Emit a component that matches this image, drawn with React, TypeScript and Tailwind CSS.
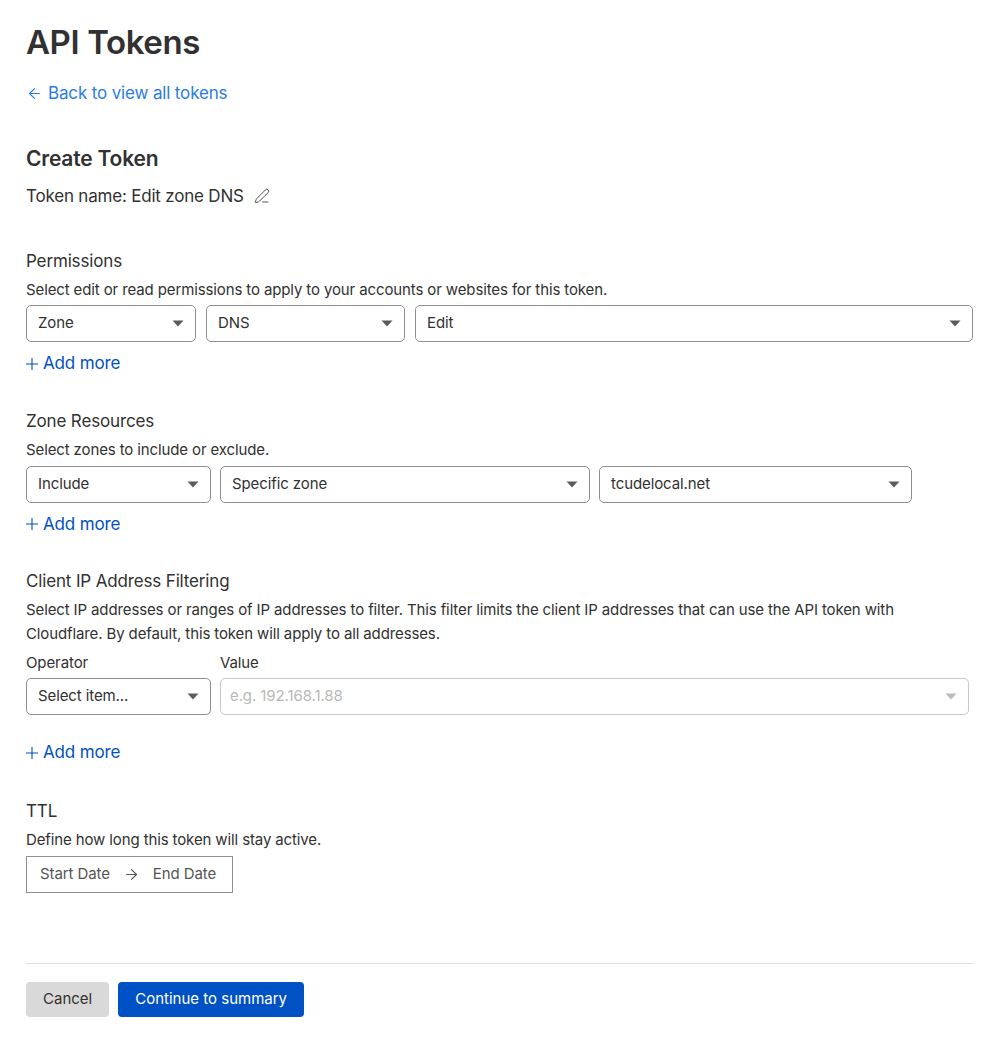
import { ArrowLeft, ArrowRight, PenLine } from 'lucide-react'

function Caret({ muted = false }: { muted?: boolean }) {
  return (
    <svg width="12" height="7" viewBox="0 0 12 7" className="shrink-0">
      <path d="M0.5 0.5h11L6 6.5z" fill={muted ? '#bdbdbd' : '#5c5c5c'} />
    </svg>
  )
}

function Select({ value, width, muted = false, placeholder = false }: { value: string; width: string; muted?: boolean; placeholder?: boolean }) {
  return (
    <div
      className={`flex h-[37px] items-center justify-between rounded-[5px] border pl-[11px] pr-[11px] ${width} ${
        muted ? 'border-[#c8c8c8]' : 'border-[#8f8f8f]'
      }`}
    >
      <span className={`text-[15px] tracking-[-0.1px] ${placeholder ? 'text-[#b9b9b9]' : 'text-[#313131]'}`}>{value}</span>
      <Caret muted={muted} />
    </div>
  )
}

function AddMore() {
  return (
    <button className="mt-[9px] flex items-center gap-[5px] text-[17px] tracking-[-0.15px] text-[#0051c3]">
      <svg width="12" height="12" viewBox="0 0 12 12" className="shrink-0">
        <path d="M6 0v12M0 6h12" stroke="#0051c3" strokeWidth="1.1" />
      </svg>
      <span>Add more</span>
    </button>
  )
}

function Section({ title, desc, children }: { title: string; desc: React.ReactNode; children: React.ReactNode }) {
  return (
    <section>
      <h3 className="text-[17px] leading-[24px] tracking-[-0.15px] text-[#313131]">{title}</h3>
      <p className="mt-[5px] text-[15px] leading-[24px] tracking-[-0.12px] text-[#313131]">{desc}</p>
      {children}
    </section>
  )
}

export default function App() {
  return (
    <div className="min-h-[1053px] bg-white px-[26px] pt-[22px] font-['Inter',sans-serif] text-[#313131]">
      <h1 className="text-[33px] font-semibold leading-[40px] tracking-[-0.4px]">API Tokens</h1>

      <a className="mt-[19px] flex items-center gap-[5px] text-[17px] tracking-[-0.15px] text-[#2a7be4]">
        <ArrowLeft className="h-[17px] w-[17px]" strokeWidth={1.6} />
        <span>Back to view all tokens</span>
      </a>

      <h2 className="mt-[38px] text-[21px] font-semibold leading-[28px] tracking-[-0.2px]">Create Token</h2>
      <div className="mt-[11px] flex items-center gap-[10px] text-[17px] tracking-[-0.2px]">
        <span>Token name: Edit zone DNS</span>
        <PenLine className="h-[16px] w-[16px] text-[#555]" strokeWidth={1.5} />
      </div>

      <div className="mt-[40px] flex flex-col">
        <Section title="Permissions" desc="Select edit or read permissions to apply to your accounts or websites for this token.">
          <div className="mt-[3px] flex gap-[10px]">
            <Select value="Zone" width="w-[170px]" />
            <Select value="DNS" width="w-[199px]" />
            <Select value="Edit" width="w-[558px]" />
          </div>
          <AddMore />
        </Section>

        <div className="mt-[32px]">
          <Section title="Zone Resources" desc="Select zones to include or exclude.">
            <div className="mt-[4px] flex gap-[9px]">
              <Select value="Include" width="w-[185px]" />
              <Select value="Specific zone" width="w-[370px]" />
              <Select value="tcudelocal.net" width="w-[313px]" />
            </div>
            <AddMore />
          </Section>
        </div>

        <div className="mt-[32px]">
          <Section
            title="Client IP Address Filtering"
            desc="Select IP addresses or ranges of IP addresses to filter. This filter limits the client IP addresses that can use the API token with Cloudflare. By default, this token will apply to all addresses."
          >
            <div className="mt-[7px] flex gap-[9px]">
              <div className="flex w-[185px] flex-col gap-[5px]">
                <label className="text-[15px] leading-[20px] tracking-[-0.1px]">Operator</label>
                <Select value="Select item..." width="w-[185px]" />
              </div>
              <div className="flex w-[749px] flex-col gap-[5px]">
                <label className="text-[15px] leading-[20px] tracking-[-0.1px]">Value</label>
                <div className="flex h-[37px] items-center justify-between rounded-[5px] border border-[#c8c8c8] pl-[9px] pr-[11px]">
                  <span className="text-[15px] tracking-[-0.1px] text-[#b9b9b9]">e.g. 192.168.1.88</span>
                  <Caret muted />
                </div>
              </div>
            </div>
            <div className="mt-[25px]">
              <AddMore />
            </div>
          </Section>
        </div>

        <div className="mt-[33px]">
          <Section title="TTL" desc="Define how long this token will stay active.">
            <div className="mt-[4px] flex h-[37px] w-[207px] items-center gap-[13px] border border-[#8f8f8f] px-[13px] text-[15px] tracking-[-0.1px] text-[#555]">
              <span>Start Date</span>
              <ArrowRight className="h-[17px] w-[17px]" strokeWidth={1.5} />
              <span>End Date</span>
            </div>
          </Section>
        </div>
      </div>

      <div className="mt-[70px] h-px w-[947px] bg-[#dedede]" />

      <div className="mt-[18px] flex gap-[9px]">
        <button className="h-[35px] rounded-[4px] bg-[#d9d9d9] px-[17px] text-[15px] text-[#313131]">Cancel</button>
        <button className="h-[35px] rounded-[4px] bg-[#0051c3] px-[17px] text-[15px] text-white">Continue to summary</button>
      </div>
    </div>
  )
}
